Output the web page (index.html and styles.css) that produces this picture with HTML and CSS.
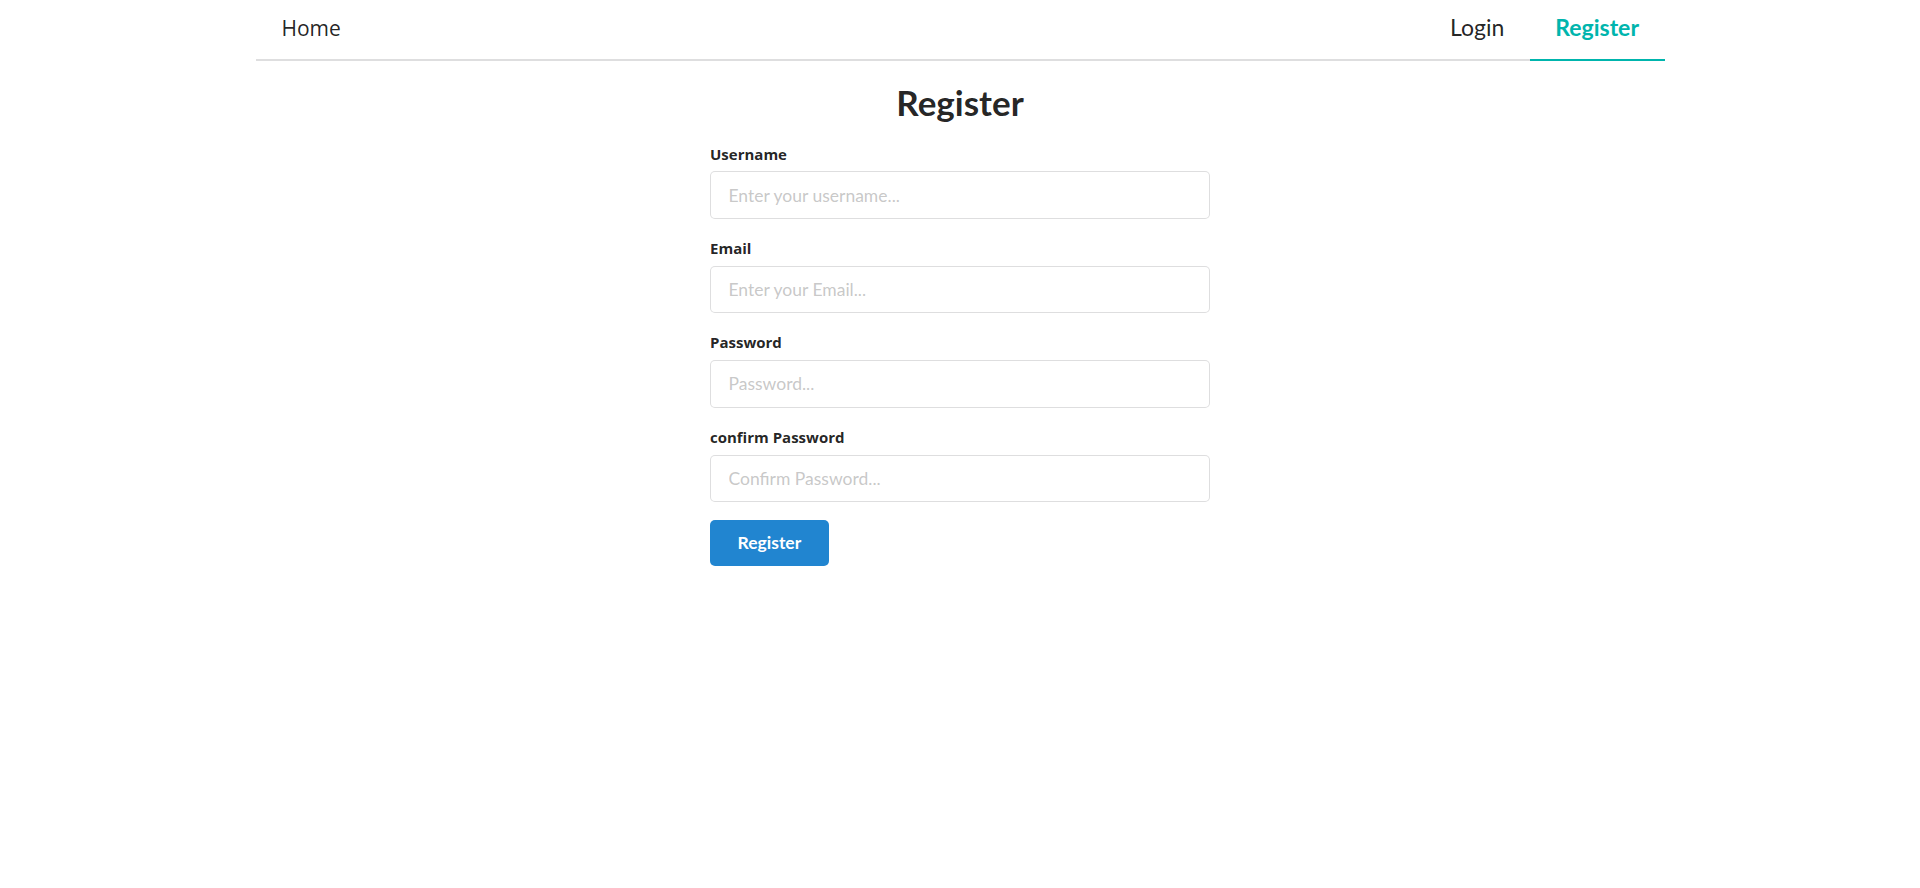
FILE: index.html
```html
<!DOCTYPE html>
<html lang="en">
<head>
<meta charset="utf-8">
<title>Register</title>
<link rel="stylesheet" href="styles.css">
</head>
<body>
  <div class="container">
    <nav class="menu">
      <a class="item home" href="#">Home</a>
      <div class="right">
        <a class="item" href="#">Login</a>
        <a class="item active" href="#">Register</a>
      </div>
    </nav>
    <h1 class="title">Register</h1>
    <form class="form">
      <div class="field">
        <label>Username</label>
        <input type="text" placeholder="Enter your username...">
      </div>
      <div class="field">
        <label>Email</label>
        <input type="text" placeholder="Enter your Email...">
      </div>
      <div class="field">
        <label>Password</label>
        <input type="password" placeholder="Password...">
      </div>
      <div class="field">
        <label>confirm Password</label>
        <input type="password" placeholder="Confirm Password...">
      </div>
      <button type="button" class="btn">Register</button>
    </form>
  </div>
</body>
</html>
```

FILE: styles.css
```css
html, body {
  margin: 0;
  padding: 0;
  background: #ffffff;
}
body {
  font-family: Lato, "Liberation Sans", sans-serif;
  color: rgba(0, 0, 0, 0.87);
}
.container {
  width: 1409px;
  margin: 0 auto;
}
.menu {
  display: flex;
  justify-content: space-between;
  border-bottom: 2.5px solid rgba(34, 36, 38, 0.15);
}
.menu .right {
  display: flex;
}
.item {
  display: block;
  font-family: Lato, sans-serif;
  font-size: 23px;
  line-height: 1;
  padding: 15.5px 25.5px 20.5px;
  margin-bottom: -2.5px;
  border-bottom: 2.5px solid transparent;
  color: rgba(0, 0, 0, 0.87);
  text-decoration: none;
}
.item.home {
  font-family: "Open Sans", sans-serif;
  font-size: 21px;
  padding: 17.5px 26px 20.5px 26px;
}
.item.active {
  font-weight: 700;
  color: #00b5ad;
  border-bottom-color: #00b5ad;
}
.title {
  font-family: Lato, sans-serif;
  font-weight: 700;
  font-size: 35px;
  line-height: 45px;
  text-align: center;
  margin: 19px 0 17.5px;
  color: rgba(0, 0, 0, 0.87);
}
.form {
  width: 500px;
  margin: 0 auto;
}
.field {
  display: flex;
  flex-direction: column;
  margin-bottom: 17.8px;
}
.field label {
  font-family: "Open Sans", sans-serif;
  font-weight: 700;
  font-size: 15px;
  line-height: 21.4px;
  padding-top: 1.5px;
  margin-bottom: 6.5px;
  color: rgba(0, 0, 0, 0.87);
}
.field input {
  font-family: Lato, sans-serif;
  font-size: 17.5px;
  line-height: 21.25px;
  height: 47.25px;
  box-sizing: border-box;
  padding: 12px 17.5px;
  border: 1px solid rgba(34, 36, 38, 0.15);
  border-radius: 5px;
  color: rgba(0, 0, 0, 0.87);
  outline: none;
  margin: 0;
}
.field input::placeholder {
  color: rgba(191, 191, 191, 0.87);
}
.btn {
  display: block;
  font-family: Lato, sans-serif;
  font-weight: 700;
  font-size: 17.5px;
  line-height: 1;
  height: 46px;
  padding: 0 27.5px;
  background: #2185d0;
  color: #ffffff;
  border: none;
  border-radius: 5px;
  cursor: pointer;
}
```
